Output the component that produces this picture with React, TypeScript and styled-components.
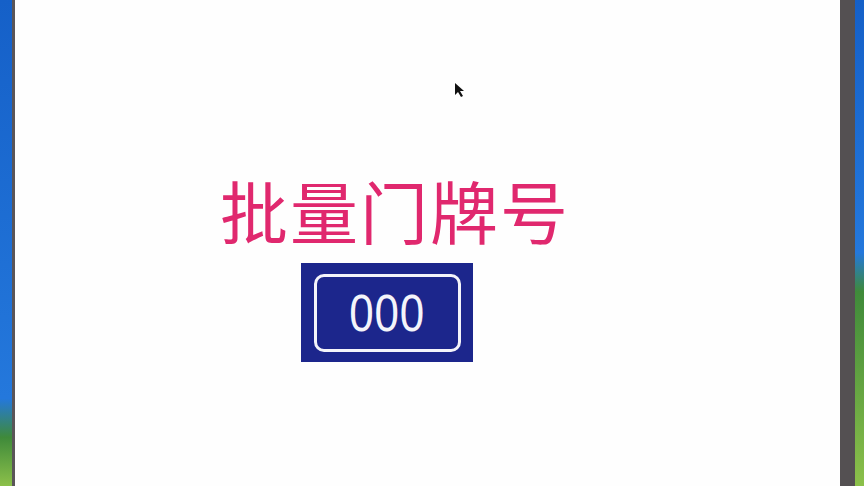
import React from "react";
import styled, { createGlobalStyle } from "styled-components";

const GlobalStyle = createGlobalStyle`
  html, body {
    margin: 0;
    padding: 0;
    width: 864px;
    height: 486px;
    overflow: hidden;
  }
  #root {
    height: 100%;
  }
`;

const Screen = styled.div`
  display: flex;
  width: 864px;
  height: 486px;
  font-family: "Noto Sans CJK SC", "Noto Sans", sans-serif;
`;

const Desktop = styled("div")<{ width: number; green: number }>`
  width: ${(p) => p.width}px;
  flex-shrink: 0;
  background: linear-gradient(
    to bottom,
    #1560c8 0%,
    #2478dc ${(p) => p.green - 8}%,
    #3f8a3a ${(p) => p.green}%,
    #8cc04a 100%
  );
`;

const Frame = styled.div`
  width: 3px;
  flex-shrink: 0;
  background: #5a5558;
`;

const FrameRight = styled.div`
  width: 15px;
  flex-shrink: 0;
  background: #545052;
`;

const Window = styled.div`
  position: relative;
  flex: 1;
  background: #fefefe;
  display: flex;
  flex-direction: column;
  padding-top: 165px;
  padding-left: 205px;
`;

const Title = styled.div`
  font-size: 68px;
  line-height: 90px;
  color: #e0286e;
  letter-spacing: 2px;
  font-weight: 400;
`;

const Plate = styled.div`
  margin-top: 8px;
  margin-left: 81px;
  width: 172px;
  height: 99px;
  background: #1c268c;
  display: flex;
  align-items: center;
  justify-content: center;
`;

const PlateInner = styled.div`
  width: 141px;
  height: 70px;
  border: 3px solid #f4f4fa;
  border-radius: 10px;
  display: flex;
  align-items: center;
  justify-content: center;
  color: #f4f4fa;
  font-family: "Liberation Sans", Arial, sans-serif;
  font-size: 51px;
  padding-top: 2px;
  box-sizing: content-box;
`;

const Digits = styled.span`
  display: inline-block;
  transform: scaleX(0.86);
  letter-spacing: 1px;
`;

const Cursor = styled.svg`
  position: absolute;
  left: 439px;
  top: 82px;
`;

export default function App() {
  return (
    <>
      <GlobalStyle />
      <Screen>
        <Desktop width={12} green={90} />
        <Frame />
        <Window>
          <Title>批量门牌号</Title>
          <Plate>
            <PlateInner>
              <Digits>000</Digits>
            </PlateInner>
          </Plate>
          <Cursor width="12" height="16" viewBox="0 0 12 16">
            <path d="M1 1 L1 13 L4 10 L7 15 L9 14 L6 9 L10 9 Z" fill="#111" />
          </Cursor>
        </Window>
        <FrameRight />
        <Desktop width={9} green={60} />
      </Screen>
    </>
  );
}
